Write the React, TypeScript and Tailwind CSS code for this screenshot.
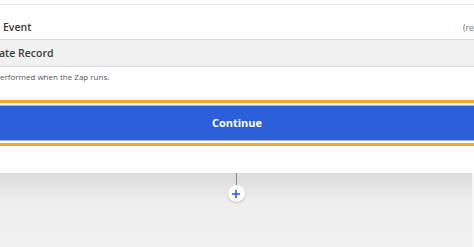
export default function App() {
  return (
    <div className="w-[474px] h-[247px] overflow-hidden bg-white font-['Open_Sans',sans-serif] flex flex-col">
      {/* card */}
      <div className="flex flex-col">
        <div className="h-[5px] border-b border-[#e8e8e8]" />
        <div className="h-[35px] flex items-end justify-between pb-[7px] pl-[3px] border-b border-[#d3dbe5]">
          <span className="text-[10.5px] font-semibold text-[#3a3a3a] leading-none">Event</span>
          <span className="text-[8.5px] text-[#777] leading-none whitespace-nowrap w-[11px] overflow-hidden">(re</span>
        </div>
        <div className="h-[27px] flex items-center bg-[#f1f1f1] border-b border-[#d3dbe5]">
          <span className="text-[10.5px] font-semibold text-[#3a3a3a] leading-none ml-[-1px]">ate Record</span>
        </div>
        <div className="h-[33px] pt-[6px] leading-none">
          <span className="block text-[8px] text-[#555] leading-none">erformed when the Zap runs.</span>
        </div>
        <div className="border-y-[3px] border-[#f2a72c] py-[2px] bg-white">
          <button className="w-full h-[36px] bg-[#2b5fd9] border-y border-[#9fb8ec] text-white text-[11px] font-bold">
            Continue
          </button>
        </div>
        <div className="h-[27px]" />
      </div>
      {/* canvas */}
      <div className="flex-1 flex">
        <div className="flex-1 bg-gradient-to-b from-[#dcdcdc] via-[#efefef] via-40% to-[#f1f1f1] flex flex-col items-center">
          <div className="w-px h-[12px] bg-[#8a8a8a]" />
          <div className="w-[17px] h-[17px] rounded-full bg-white shadow-[0_1px_2px_rgba(0,0,0,0.2)] flex items-center justify-center">
            <svg width="10" height="10" viewBox="0 0 10 10">
              <path d="M5 1v8M1 5h8" stroke="#2b5fd9" strokeWidth="1.6" />
            </svg>
          </div>
        </div>
        <div className="w-[2px] bg-[#f7f7f7]" />
      </div>
    </div>
  );
}
